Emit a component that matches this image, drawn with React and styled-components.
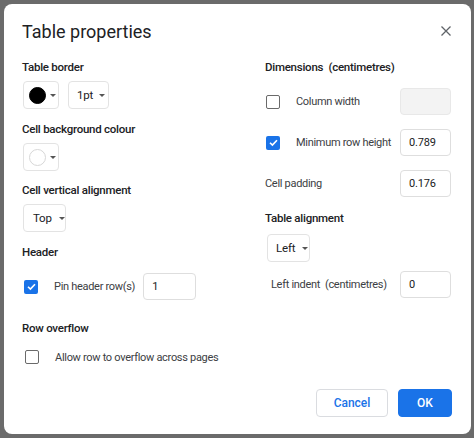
import React from "react";
import styled, { createGlobalStyle } from "styled-components";

const Global = createGlobalStyle`
  html, body { margin: 0; padding: 0; background: #6a6a6a; }
  body { font-family: Roboto, "Open Sans", Arial, sans-serif; }
  * { box-sizing: border-box; }
`;

const Backdrop = styled.div`
  width: 474px;
  height: 438px;
  padding: 4px;
  background: #6b6b6b;
`;

const Dialog = styled.div`
  width: 467px;
  height: 430px;
  background: #fff;
  border-radius: 8px;
  display: flex;
  flex-direction: column;
  padding: 15px 19px 17px 18px;
`;

const Header = styled.div`
  display: flex;
  align-items: center;
  justify-content: space-between;
  height: 24px;
`;

const Title = styled.h1`
  margin: 0;
  font-family: Roboto, sans-serif;
  font-weight: 400;
  font-size: 18px;
  color: #202124;
`;

const Close = styled.button`
  border: 0;
  background: none;
  padding: 0;
  width: 16px;
  height: 16px;
  margin-right: -2px;
  display: flex;
  align-items: center;
  justify-content: center;
  cursor: pointer;
`;

const Body = styled.div`
  display: grid;
  grid-template-columns: 243px 186px;
  margin-top: 15px;
`;

const Column = styled.div`
  display: flex;
  flex-direction: column;
  min-width: 0;
`;

const SectionLabel = styled.div`
  font-family: Roboto, sans-serif;
  font-size: 11.5px;
  font-weight: 500;
  letter-spacing: -0.25px;
  color: #202124;
  line-height: 18px;
  height: 18px;
  margin-top: ${(p) => p.$mt || 0}px;
  white-space: pre;
`;

const Row = styled.div`
  display: flex;
  align-items: center;
  gap: ${(p) => p.$gap || 0}px;
  margin-top: ${(p) => p.$mt || 0}px;
  padding-left: ${(p) => p.$pl || 0}px;
  height: ${(p) => p.$h || 28}px;
`;

const Dropdown = styled.button`
  height: 28px;
  width: ${(p) => p.$w}px;
  border: 1px solid #e3e3e3;
  border-radius: 4px;
  background: #fff;
  display: flex;
  align-items: center;
  gap: ${(p) => p.$gap || 6}px;
  padding: 0 0 0 ${(p) => p.$pl || 8}px;
  font-family: Roboto, sans-serif;
  font-size: 11.5px;
  letter-spacing: -0.2px;
  color: #202124;
`;

const Caret = styled.span`
  width: 0;
  height: 0;
  flex: none;
  border-left: 3px solid transparent;
  border-right: 3px solid transparent;
  border-top: 3px solid #555;
`;

const Swatch = styled.span`
  width: 17px;
  height: 17px;
  flex: none;
  border-radius: 50%;
  background: ${(p) => p.$color};
  border: 1px solid ${(p) => (p.$color === "#fff" ? "#d7d7d7" : p.$color)};
`;

const Box = styled.span`
  width: 14px;
  height: 14px;
  border-radius: 2px;
  flex: none;
  display: flex;
  align-items: center;
  justify-content: center;
  border: ${(p) => (p.$checked ? "none" : "1.5px solid #6a6a6a")};
  background: ${(p) => (p.$checked ? "#1a73e8" : "#fff")};
  margin-left: ${(p) => p.$ml || 0}px;
`;

const OptionLabel = styled.span`
  font-family: Roboto, sans-serif;
  font-size: 11px;
  letter-spacing: -0.3px;
  color: #3c4043;
  white-space: pre;
  margin-left: ${(p) => p.$ml || 0}px;
  flex: ${(p) => (p.$grow ? 1 : "none")};
`;

const Field = styled.div`
  width: ${(p) => p.$w || 51}px;
  height: ${(p) => p.$h || 27}px;
  border: 1px solid ${(p) => (p.$disabled ? "#e8e8e8" : "#dedede")};
  background: ${(p) => (p.$disabled ? "#f3f3f3" : "#fff")};
  border-radius: 4px;
  display: flex;
  align-items: center;
  padding-left: 8px;
  font-family: Roboto, sans-serif;
  font-size: 11px;
  letter-spacing: -0.2px;
  color: #202124;
  flex: none;
  margin-left: ${(p) => p.$ml || 0}px;
`;

const Footer = styled.div`
  margin-top: auto;
  display: flex;
  justify-content: flex-end;
  gap: 10px;
`;

const Btn = styled.button`
  height: 28px;
  width: ${(p) => p.$w}px;
  border-radius: 4px;
  font-family: Roboto, sans-serif;
  font-size: 12px;
  font-weight: 500;
  border: 1px solid ${(p) => (p.$primary ? "#1a73e8" : "#dadce0")};
  background: ${(p) => (p.$primary ? "#1a73e8" : "#fff")};
  color: ${(p) => (p.$primary ? "#fff" : "#1a73e8")};
  cursor: pointer;
`;

function Check({ checked, ml }) {
  return (
    <Box $checked={checked} $ml={ml}>
      {checked && (
        <svg width="11" height="11" viewBox="0 0 12 12">
          <path d="M2.2 6.3 L4.8 8.8 L9.8 3.6" fill="none" stroke="#fff" strokeWidth="1.8" />
        </svg>
      )}
    </Box>
  );
}

export default function App() {
  return (
    <Backdrop>
      <Global />
      <Dialog>
        <Header>
          <Title>Table properties</Title>
          <Close aria-label="Close">
            <svg width="10" height="10" viewBox="0 0 10 10">
              <path d="M0.5 0.5 L9.5 9.5 M9.5 0.5 L0.5 9.5" stroke="#5f6368" strokeWidth="1.3" />
            </svg>
          </Close>
        </Header>
        <Body>
          <Column>
            <SectionLabel>Table border</SectionLabel>
            <Row $mt={5} $gap={9} $pl={1}>
              <Dropdown $w={36} $pl={5} $gap={4}>
                <Swatch $color="#000" />
                <Caret />
              </Dropdown>
              <Dropdown $w={41} $pl={8} $gap={6}>
                1pt
                <Caret />
              </Dropdown>
            </Row>
            <SectionLabel $mt={11}>Cell background colour</SectionLabel>
            <Row $mt={5} $pl={1}>
              <Dropdown $w={36} $pl={5} $gap={4}>
                <Swatch $color="#fff" />
                <Caret />
              </Dropdown>
            </Row>
            <SectionLabel $mt={10}>Cell vertical alignment</SectionLabel>
            <Row $mt={5} $pl={1}>
              <Dropdown $w={43} $pl={9} $gap={7}>
                Top
                <Caret />
              </Dropdown>
            </Row>
            <SectionLabel $mt={11}>Header</SectionLabel>
            <Row $mt={12} $h={27}>
              <Check checked ml={2} />
              <OptionLabel $ml={16}>Pin header row(s)</OptionLabel>
              <Field $ml={8} $w={53}>1</Field>
            </Row>
            <SectionLabel $mt={19}>Row overflow</SectionLabel>
            <Row $mt={10} $h={20}>
              <Check ml={3} />
              <OptionLabel $ml={16}>Allow row to overflow across pages</OptionLabel>
            </Row>
          </Column>
          <Column>
            <SectionLabel>{"Dimensions  (centimetres)"}</SectionLabel>
            <Row $mt={12} $h={27}>
              <Check ml={1} />
              <OptionLabel $ml={16} $grow>Column width</OptionLabel>
              <Field $disabled />
            </Row>
            <Row $mt={14} $h={27}>
              <Check checked ml={1} />
              <OptionLabel $ml={16} $grow>Minimum row height</OptionLabel>
              <Field>0.789</Field>
            </Row>
            <Row $mt={14} $h={27}>
              <OptionLabel $grow>Cell padding</OptionLabel>
              <Field>0.176</Field>
            </Row>
            <SectionLabel $mt={12}>Table alignment</SectionLabel>
            <Row $mt={7} $pl={2}>
              <Dropdown $w={43} $pl={8} $gap={7}>
                Left
                <Caret />
              </Dropdown>
            </Row>
            <Row $mt={9} $h={27}>
              <OptionLabel $ml={6} $grow>{"Left indent  (centimetres)"}</OptionLabel>
              <Field>0</Field>
            </Row>
          </Column>
        </Body>
        <Footer>
          <Btn $w={72}>Cancel</Btn>
          <Btn $w={54} $primary>OK</Btn>
        </Footer>
      </Dialog>
    </Backdrop>
  );
}
